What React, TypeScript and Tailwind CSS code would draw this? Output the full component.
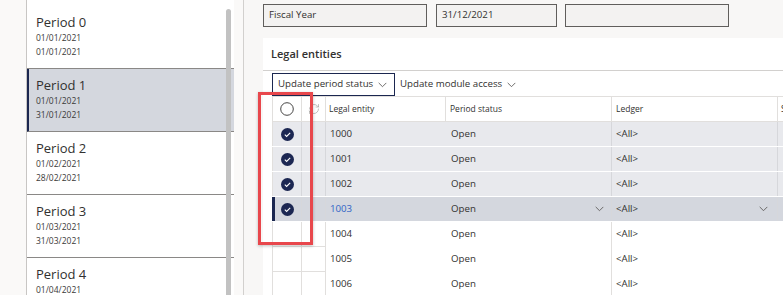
import React from "react";
import { RefreshCw } from "lucide-react";

const periods = [
  { name: "Period 0", a: "01/01/2021", b: "01/01/2021" },
  { name: "Period 1", a: "01/01/2021", b: "31/01/2021", sel: true },
  { name: "Period 2", a: "01/02/2021", b: "28/02/2021" },
  { name: "Period 3", a: "01/03/2021", b: "31/03/2021" },
  { name: "Period 4", a: "01/04/2021", b: "30/04/2021" },
];

const rows = [
  { id: "1000", checked: true },
  { id: "1001", checked: true },
  { id: "1002", checked: true },
  { id: "1003", checked: true, active: true },
  { id: "1004" },
  { id: "1005" },
  { id: "1006" },
];

function Chevron({ className = "" }: { className?: string }) {
  return (
    <svg width="9" height="6" viewBox="0 0 9 6" className={className}>
      <path d="M0.7 0.9 L4.5 4.7 L8.3 0.9" fill="none" stroke="#605e5c" strokeWidth="0.9" />
    </svg>
  );
}

function CheckedCircle() {
  return (
    <svg width="13" height="13" viewBox="0 0 13 13">
      <circle cx="6.5" cy="6.5" r="6.5" fill="#1c2752" />
      <path d="M3.8 6.7 L5.6 8.4 L9.2 4.8" fill="none" stroke="#ffffff" strokeWidth="1.1" />
    </svg>
  );
}

function EmptyCircle() {
  return (
    <svg width="14" height="14" viewBox="0 0 14 14">
      <circle cx="7" cy="7" r="6.3" fill="#ffffff" stroke="#323130" strokeWidth="0.9" />
    </svg>
  );
}

export default function App() {
  return (
    <div className="relative w-[783px] h-[295px] overflow-hidden flex bg-white font-['Open_Sans',sans-serif] text-[#323130]">
      {/* Left period list */}
      <div className="w-[244px] h-full shrink-0 bg-[#faf9f8] border-r border-[#d2d0ce] pl-[26px] pr-[9px]">
        <div className="relative h-full bg-white border-l border-[#c8c6c4] pt-[6px] overflow-hidden">
          {periods.map((p) =>
            p.sel ? (
              <div
                key={p.name}
                className="h-[63px] -ml-px border-l-[3px] border-l-[#1b2750] border-b border-b-[#8a8886] bg-[#d4d7de] pl-[7px] pt-[7px]"
              >
                <div className="text-[13px] leading-[18px]">{p.name}</div>
                <div className="text-[8.5px] leading-[14px] text-[#3b3a39]">{p.a}</div>
                <div className="text-[8.5px] leading-[14px] text-[#3b3a39]">{p.b}</div>
              </div>
            ) : (
              <div key={p.name} className="h-[63px] border-b border-[#8a8886] pl-[9px] pt-[7px]">
                <div className="text-[13px] leading-[18px]">{p.name}</div>
                <div className="text-[8.5px] leading-[14px] text-[#3b3a39]">{p.a}</div>
                <div className="text-[8.5px] leading-[14px] text-[#3b3a39]">{p.b}</div>
              </div>
            )
          )}
          <div className="absolute right-[3px] top-[9px] bottom-0 w-[5px] rounded-t-full bg-[#c2c2c2]" />
        </div>
      </div>

      {/* Right content */}
      <div className="flex-1 flex flex-col bg-[#f8f7f6] min-w-0">
        <div className="h-[38px] shrink-0 pl-[19px] pt-[4px] flex">
          <div className="w-[164px] h-[23px] border border-[#605e5c] bg-[#f3f2f1] pl-[5px] flex items-center text-[9.7px]">
            Fiscal Year
          </div>
          <div className="ml-[9px] w-[121px] h-[23px] border border-[#605e5c] bg-[#f3f2f1] pl-[5px] flex items-center text-[9.7px]">
            31/12/2021
          </div>
          <div className="ml-[8px] w-[164px] h-[23px] border border-[#605e5c] bg-[#f3f2f1]" />
        </div>

        <div className="flex-1 ml-[19px] bg-white flex flex-col min-w-0">
          <div className="h-[33px] shrink-0 border-b border-[#d2d0ce] pl-[8px] flex items-center">
            <span className="text-[11px] font-semibold">Legal entities</span>
          </div>

          <div className="h-[25px] shrink-0 pl-[9px] pt-[2px] flex items-start">
            <div className="h-[23px] w-[123px] border border-[#1b2750] px-[5px] flex items-center gap-[5px] text-[9.7px]">
              <span>Update period status</span>
              <Chevron />
            </div>
            <div className="h-[23px] pl-[5px] flex items-center gap-[5px] text-[9.7px]">
              <span>Update module access</span>
              <Chevron />
            </div>
          </div>

          {/* Grid */}
          <div className="ml-[9px] flex flex-col overflow-hidden">
            <div className="flex h-[26px] border-t border-b border-[#e1dfdd] bg-white text-[8.5px] w-[600px]">
              <div className="w-[30px] shrink-0 border-l border-r border-[#e1dfdd] flex items-center justify-center">
                <EmptyCircle />
              </div>
              <div className="w-[24px] shrink-0 border-r border-[#e1dfdd] flex items-center justify-center">
                <RefreshCw size={12} strokeWidth={1.3} color="#a19f9d" />
              </div>
              <div className="w-[120px] shrink-0 border-r border-[#e1dfdd] pl-[3px] flex items-center">Legal entity</div>
              <div className="w-[166px] shrink-0 border-r border-[#e1dfdd] pl-[4px] flex items-center">Period status</div>
              <div className="w-[166px] shrink-0 border-r border-[#e1dfdd] pl-[4px] flex items-center">Ledger</div>
              <div className="w-[90px] shrink-0 pl-[3px] flex items-center">Status</div>
            </div>

            {rows.map((r) => {
              const bg = r.active ? "bg-[#d4d7de]" : r.checked ? "bg-[#e8e9ed]" : "bg-white";
              const rowBorder = r.checked ? "border-b border-white" : "";
              return (
                <div key={r.id} className={`flex h-[25px] w-[600px] text-[9.7px] ${bg} ${rowBorder}`}>
                  <div
                    className={
                      r.active
                        ? "w-[30px] shrink-0 border-l-[3px] border-l-[#1b2750] border-r border-r-[#d6d7db] pr-[2px] flex items-center justify-center"
                        : r.checked
                        ? "w-[30px] shrink-0 border-l border-l-[#e1dfdd] border-r border-r-[#d6d7db] flex items-center justify-center"
                        : "w-[30px] shrink-0 border-l border-r border-b border-[#e1dfdd] flex items-center justify-center"
                    }
                  >
                    {r.checked ? <CheckedCircle /> : null}
                  </div>
                  <div
                    className={
                      r.checked
                        ? "w-[24px] shrink-0 border-r border-[#d6d7db]"
                        : "w-[24px] shrink-0 border-r border-b border-[#e1dfdd]"
                    }
                  />
                  <div className={`w-[120px] shrink-0 pl-[4px] flex items-center ${r.active ? "text-[#2f64c6]" : ""}`}>
                    {r.id}
                  </div>
                  <div
                    className={`w-[166px] shrink-0 pl-[5px] pr-[7px] flex items-center justify-between border-r ${
                      r.checked ? "border-[#d6d7db]" : "border-[#e1dfdd]"
                    }`}
                  >
                    <span>Open</span>
                    {r.active ? <Chevron /> : null}
                  </div>
                  <div
                    className={`w-[166px] shrink-0 pl-[4px] pr-[9px] flex items-center justify-between ${
                      r.checked ? "border-r border-[#d6d7db]" : ""
                    }`}
                  >
                    <span>&lt;All&gt;</span>
                    {r.active ? <Chevron /> : null}
                  </div>
                  <div className="w-[90px] shrink-0" />
                </div>
              );
            })}
          </div>
        </div>
      </div>

      {/* Annotation highlight */}
      <div className="absolute left-[258px] top-[92px] w-[55px] h-[153px] border-[3px] border-[#e8474c] shadow-[0_1px_3px_rgba(0,0,0,0.25)] pointer-events-none" />
    </div>
  );
}
